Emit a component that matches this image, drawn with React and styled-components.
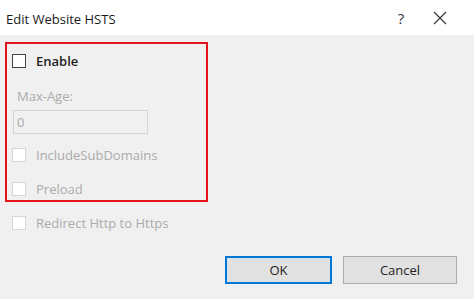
import React from 'react';
import styled, { createGlobalStyle } from 'styled-components';

const Global = createGlobalStyle`
    html, body {
        margin: 0;
        padding: 0;
        background: #ffffff;
    }
    * {
        box-sizing: border-box;
    }
`;

const Window = styled.div`
    width: 474px;
    height: 299px;
    display: flex;
    flex-direction: column;
    font-family: 'Open Sans', 'Noto Sans', 'Liberation Sans', sans-serif;
    background: #ffffff;
    overflow: hidden;
`;

const TitleBar = styled.div`
    height: 35px;
    display: flex;
    align-items: center;
    padding-left: 6px;
    background: #ffffff;
`;

const Title = styled.div`
    flex: 1;
    font-size: 13px;
    color: #1a1a1a;
    margin-top: 2px;
`;

const TitleButton = styled.div`
    width: ${(p) => p.w}px;
    height: 35px;
    display: flex;
    align-items: center;
    justify-content: center;
    color: #333;
    font-size: 15px;
`;

const Body = styled.div`
    flex: 1;
    background: #f0f0f0;
    padding: 7px 0 15px 5px;
    display: flex;
    flex-direction: column;
`;

const Group = styled.div`
    width: 203px;
    border: 2px solid #e3121b;
    padding: 7px 0 1px 5px;
    display: flex;
    flex-direction: column;
`;

const CheckRow = styled.label`
    height: 20px;
    margin-top: ${(p) => p.mt || 0}px;
    display: flex;
    align-items: center;
    gap: 10px;
    font-size: 13px;
    font-weight: ${(p) => (p.disabled ? 400 : 600)};
    color: ${(p) => (p.disabled ? '#ababab' : '#222')};
`;

const Box = styled.span`
    width: 14px;
    height: 14px;
    flex: none;
    background: #ffffff;
    border: 1px solid ${(p) => (p.disabled ? '#d6d6d6' : '#444')};
`;

const Label = styled.div`
    height: 20px;
    margin-top: 15px;
    padding-left: 5px;
    display: flex;
    align-items: center;
    font-size: 13px;
    color: #ababab;
`;

const Input = styled.div`
    width: 135px;
    height: 24px;
    margin-top: 4px;
    margin-left: 1px;
    border: 1px solid #d4d4d4;
    background: #f0f0f0;
    display: flex;
    align-items: center;
    padding-left: 3px;
    font-size: 13px;
    color: #ababab;
`;

const Outer = styled.div`
    padding-left: 7px;
`;

const Footer = styled.div`
    margin-top: auto;
    display: flex;
    justify-content: flex-end;
    gap: 11px;
    padding-right: 17px;
`;

const Button = styled.div`
    width: ${(p) => p.w}px;
    height: 28px;
    display: flex;
    align-items: center;
    justify-content: center;
    background: #e1e1e1;
    border: ${(p) => (p.primary ? '2px solid #0078d7' : '1px solid #adadad')};
    font-size: 13px;
    color: #222;
`;

export default function App() {
    return (
        <>
            <Global />
            <Window>
                <TitleBar>
                    <Title>Edit Website HSTS</Title>
                    <TitleButton w={30}>?</TitleButton>
                    <TitleButton w={48}>
                        <svg width="14" height="14" viewBox="0 0 14 14">
                            <path d="M1 1 L13 13 M13 1 L1 13" stroke="#333" strokeWidth="1.1" fill="none" />
                        </svg>
                    </TitleButton>
                    <div style={{ width: 10 }} />
                </TitleBar>
                <Body>
                    <Group>
                        <CheckRow>
                            <Box />
                            Enable
                        </CheckRow>
                        <Label>Max-Age:</Label>
                        <Input>0</Input>
                        <CheckRow disabled mt={11}>
                            <Box disabled />
                            IncludeSubDomains
                        </CheckRow>
                        <CheckRow disabled mt={14}>
                            <Box disabled />
                            Preload
                        </CheckRow>
                    </Group>
                    <Outer>
                        <CheckRow disabled mt={11}>
                            <Box disabled />
                            Redirect Http to Https
                        </CheckRow>
                    </Outer>
                    <Footer>
                        <Button primary w={107}>OK</Button>
                        <Button w={114}>Cancel</Button>
                    </Footer>
                </Body>
            </Window>
        </>
    );
}
